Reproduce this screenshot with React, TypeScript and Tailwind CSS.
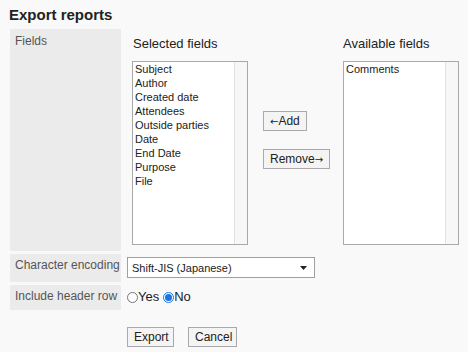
import React from 'react';

const selected = ['Subject', 'Author', 'Created date', 'Attendees', 'Outside parties', 'Date', 'End Date', 'Purpose', 'File'];
const available = ['Comments'];

const ListBox: React.FC<{ items: string[] }> = ({ items }) => (
  <div className="flex w-[116px] h-[184px] border border-[#a9a9a9] bg-white">
    <div className="flex-1 pl-[2px] text-[11px] leading-[14px] text-[#222]">
      {items.map((it) => (
        <div key={it}>{it}</div>
      ))}
    </div>
    <div className="w-[13px] border-l border-[#e2e2e2] bg-[#f7f7f7]" />
  </div>
);

const Btn: React.FC<{ children: React.ReactNode; className?: string }> = ({ children, className = '' }) => (
  <button
    type="button"
    className={`h-[20px] px-[6px] border border-[#a9a9a9] bg-[#f4f4f4] text-[12px] leading-[18px] text-[#222] ${className}`}
  >
    {children}
  </button>
);

const Arrow: React.FC<{ c: string }> = ({ c }) => (
  <span className="font-['DejaVu_Sans',sans-serif] text-[10px]">{c}</span>
);

const Radio: React.FC<{ checked?: boolean; label: string }> = ({ checked, label }) => (
  <label className="flex items-center">
    {checked ? (
      <span className="flex items-center justify-center w-[11px] h-[11px] rounded-full border border-[#1a73e8] bg-white">
        <span className="w-[7px] h-[7px] rounded-full bg-[#1a73e8]" />
      </span>
    ) : (
      <span className="w-[11px] h-[11px] rounded-full border border-[#767676] bg-white" />
    )}
    <span className="text-[13px] leading-[16px] text-[#222]">{label}</span>
  </label>
);

export default function App() {
  return (
    <div className="w-[474px] h-[358px] bg-white font-['Liberation_Sans',Arial,sans-serif]">
      <div className="w-[468px] h-[352px] bg-[#f9f9f9] pl-[10px] pt-[6px]">
        <h1 className="-ml-px text-[15px] font-bold leading-[18px] text-[#222]">Export reports</h1>

        <div className="mt-[5px] grid grid-cols-[111px_1fr] gap-y-[3px]">
          {/* Fields */}
          <div className="bg-[#ebebeb] pl-[5px] pt-[4px] text-[12px] leading-[16px] text-[#555]">Fields</div>
          <div className="flex pl-[11px] pt-[7px] pb-[6px]">
            <div>
              <div className="pl-px text-[13px] leading-[16px] text-[#222]">Selected fields</div>
              <div className="mt-[9px]">
                <ListBox items={selected} />
              </div>
            </div>
            <div className="w-[95px] pl-[15px] pt-[75px] flex flex-col items-start gap-[18px]">
              <Btn>
                <Arrow c="←" />
                Add
              </Btn>
              <Btn>
                Remove
                <Arrow c="→" />
              </Btn>
            </div>
            <div>
              <div className="text-[13px] leading-[16px] text-[#222]">Available fields</div>
              <div className="mt-[9px]">
                <ListBox items={available} />
              </div>
            </div>
          </div>

          {/* Character encoding */}
          <div className="h-[28px] bg-[#ebebeb] pl-[5px] pt-[3px] text-[12px] leading-[16px] text-[#555]">
            Character encoding
          </div>
          <div className="pl-[6px] pt-[3px]">
            <div className="flex items-center justify-between w-[188px] h-[21px] border border-[#a0a0a0] bg-white pl-[4px] pr-[7px]">
              <span className="text-[11px] leading-[14px] text-[#222]">Shift-JIS (Japanese)</span>
              <svg width="7" height="4" viewBox="0 0 7 4">
                <path d="M0 0h7L3.5 4z" fill="#222" />
              </svg>
            </div>
          </div>

          {/* Include header row */}
          <div className="h-[25px] bg-[#ebebeb] pl-[5px] pt-[3px] text-[12px] leading-[16px] text-[#555]">
            Include header row
          </div>
          <div className="flex items-center gap-[4px] pl-[6px] pb-[1px]">
            <Radio label="Yes" />
            <Radio checked label="No" />
          </div>
        </div>

        <div className="mt-[17px] ml-[117px] flex gap-[14px]">
          <Btn className="w-[47px] px-0 text-[11px]">Export</Btn>
          <Btn className="w-[49px] px-0 text-[11px]">Cancel</Btn>
        </div>
      </div>
    </div>
  );
}
